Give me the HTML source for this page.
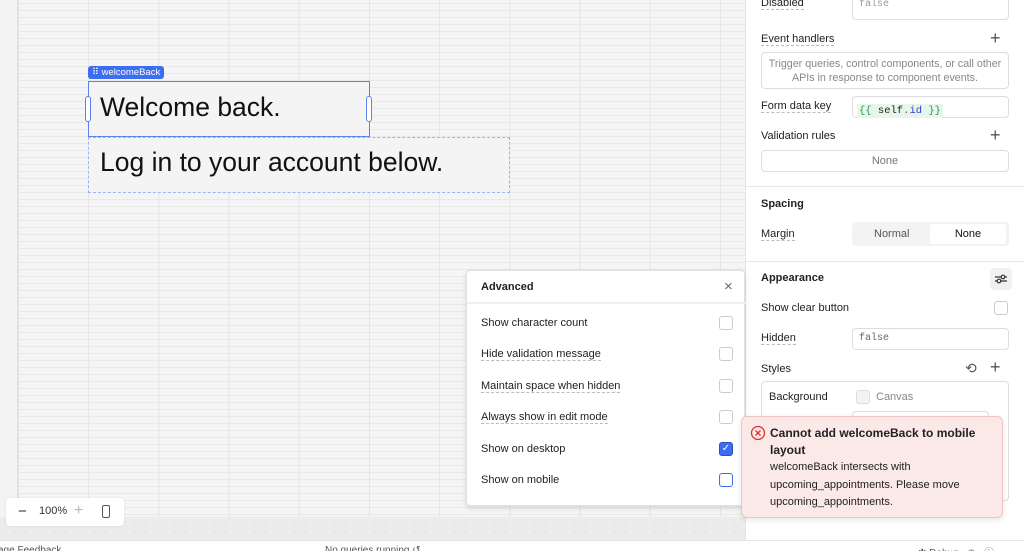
<!DOCTYPE html>
<html><head><meta charset="utf-8"><style>
*{box-sizing:border-box;margin:0;padding:0}
body{width:1024px;height:551px;overflow:hidden;position:relative;font-family:"Liberation Sans",sans-serif;background:#efefef;color:#1f1f1f}
.abs{position:absolute}
#canvas{left:17px;top:0;width:728px;height:517px;background-color:#f5f5f5;
background-image:linear-gradient(90deg,#e4e4e4 1px,transparent 1px),linear-gradient(#e9e9e9 1px,transparent 1px);
background-size:70.2px 100%,100% 7px;background-position:0 0,0 3px;border-left:1px solid #e2e2e2}
.lbl{font-size:11px;color:#222}
.u{border-bottom:1px dashed #bbb}
.inp{border:1px solid #ddd;border-radius:4px;background:#fff}
.cb{width:14px;height:14px;border:1px solid #ccc;border-radius:3px;background:#fff}
.plus{font-size:18px;color:#555;font-weight:300}
</style></head><body>
<div class="abs" style="left:0;top:0;width:17px;height:517px;background:#f3f3f3"></div>
<div id="canvas" class="abs"></div>
<div class="abs" style="left:0;top:517px;width:745px;height:23px;background:#ececec;background-image:radial-gradient(#d4d4d4 0.7px,transparent 0.8px);background-size:10px 10px"></div>
<div class="abs" style="left:88px;top:66px;height:13px;padding:0 4px;background:#3d6df0;color:#fff;font-size:9.5px;line-height:13px;border-radius:3px">⠿ welcomeBack</div>
<div class="abs" style="left:88px;top:81px;width:282px;height:56px;border:1.5px solid #5a83ef;background:#f4f4f4"></div>
<div class="abs" style="left:85px;top:96px;width:6px;height:26px;border:1.5px solid #5a83ef;border-radius:3px;background:#fff"></div>
<div class="abs" style="left:366px;top:96px;width:6px;height:26px;border:1.5px solid #5a83ef;border-radius:3px;background:#fff"></div>
<div class="abs" style="left:100px;top:92px;font-size:26.5px;color:#111">Welcome back.</div>
<div class="abs" style="left:88px;top:137px;width:422px;height:56px;border:1px dashed #9bb3f0;background:#f4f4f4"></div>
<div class="abs" style="left:100px;top:147px;font-size:26.5px;color:#111">Log in to your account below.</div>
<div class="abs" style="left:6px;top:498px;width:118px;height:28px;background:#fff;border-radius:4px;box-shadow:0 0 2px rgba(0,0,0,.1);font-size:11px;color:#333">
<span class="abs" style="left:12px;top:5px;font-size:15px">−</span><span class="abs" style="left:33px;top:7px">100%</span><span class="abs" style="left:68px;top:4px;font-size:16px;color:#bbb">+</span>
<span class="abs" style="left:96px;top:7px;width:8px;height:13px;border:1.3px solid #555;border-radius:2px"></span></div>
<div class="abs" style="left:0;top:540px;width:1024px;height:11px;background:#fff;border-top:1px solid #e6e6e6;font-size:10px;color:#555;overflow:hidden">
<span class="abs" style="left:-2px;top:4px">age Feedback</span><span class="abs" style="left:325px;top:4px">No queries running ↺</span><span class="abs" style="left:918px;top:3px">✱ Debug &nbsp; ◷ &nbsp; ⓘ</span></div>
<div class="abs" style="left:745px;top:0;width:279px;height:540px;background:#fff;border-left:1px solid #e4e4e4">
<div class="abs lbl u" style="left:15px;top:-3px">Disabled</div>
<div class="abs inp" style="left:106px;top:-4px;width:157px;height:24px;font:10px 'Liberation Mono',monospace;color:#999;padding:2px 6px">false</div>
<div class="abs lbl u" style="left:15px;top:33px">Event handlers</div><div class="abs plus" style="left:244px;top:28px">+</div>
<div class="abs inp" style="left:15px;top:52px;width:248px;height:37px;font-size:10.7px;color:#888;text-align:center;line-height:14px;padding:4px 6px 0">Trigger queries, control components, or call other APIs in response to component events.</div>
<div class="abs lbl u" style="left:15px;top:100px">Form data key</div>
<div class="abs inp" style="left:106px;top:96px;width:157px;height:22px;padding:3px 4px"><span style="background:#e6f6ea;font:10.5px 'Liberation Mono',monospace;color:#2a9a4a;padding:1px 2px">{{ <span style="color:#222">self</span><span style="color:#d33">.</span><span style="color:#2c3ed6">id</span> }}</span></div>
<div class="abs lbl" style="left:15px;top:130px">Validation rules</div><div class="abs plus" style="left:244px;top:125px">+</div>
<div class="abs inp" style="left:15px;top:150px;width:248px;height:22px;font-size:11px;color:#777;text-align:center;line-height:20px">None</div>
<div class="abs" style="left:0;top:186px;width:279px;height:1px;background:#e8e8e8"></div>
<div class="abs lbl" style="left:15px;top:198px;font-weight:bold">Spacing</div>
<div class="abs lbl u" style="left:15px;top:228px">Margin</div>
<div class="abs" style="left:106px;top:222px;width:157px;height:24px;background:#f3f3f3;border-radius:4px;font-size:11px">
<span class="abs" style="left:22px;top:6px;color:#555">Normal</span>
<span class="abs" style="left:78px;top:2px;width:76px;height:20px;background:#fff;border-radius:3px;text-align:center;line-height:20px;color:#111">None</span></div>
<div class="abs" style="left:0;top:261px;width:279px;height:1px;background:#e8e8e8"></div>
<div class="abs lbl" style="left:15px;top:272px;font-weight:bold">Appearance</div>
<div class="abs" style="left:244px;top:268px;width:22px;height:22px;background:#f0f0f0;border-radius:4px">
<svg width="22" height="22" viewBox="0 0 22 22" stroke="#333" fill="none" stroke-width="1.2"><path d="M5 9h12M5 13h12"/><circle cx="13" cy="9" r="1.8" fill="#f0f0f0"/><circle cx="9" cy="13" r="1.8" fill="#f0f0f0"/></svg></div>
<div class="abs lbl" style="left:15px;top:302px">Show clear button</div><div class="abs cb" style="left:248px;top:301px"></div>
<div class="abs lbl u" style="left:15px;top:332px">Hidden</div>
<div class="abs inp" style="left:106px;top:328px;width:157px;height:22px;font:10px 'Liberation Mono',monospace;color:#666;padding:4px 6px">false</div>
<div class="abs lbl" style="left:15px;top:363px">Styles</div><div class="abs" style="left:219px;top:360px;font-size:14px;color:#555">⟲</div><div class="abs plus" style="left:244px;top:357px">+</div>
<div class="abs inp" style="left:15px;top:381px;width:248px;height:120px"></div>
<div class="abs lbl" style="left:23px;top:391px">Background</div>
<div class="abs cb" style="left:110px;top:390px;background:#f3f3f3;border-color:#ddd"></div><div class="abs" style="left:130px;top:391px;font-size:11px;color:#888">Canvas</div>
<div class="abs inp" style="left:106px;top:411px;width:137px;height:22px"></div>
</div>
<div class="abs" style="left:466px;top:270px;width:279px;height:236px;background:#fff;border:1px solid #e0e0e0;border-radius:4px;box-shadow:0 2px 6px rgba(0,0,0,.12)">
<div class="abs lbl" style="left:14px;top:10px;font-weight:bold">Advanced</div>
<div class="abs" style="left:257px;top:7px;font-size:15px;color:#666">×</div>
<div class="abs" style="left:0;top:31px;width:279px;height:2px;background:#eee"></div>
<div class="abs lbl" style="left:14px;top:46px">Show character count</div><div class="abs cb" style="left:252px;top:45px"></div>
<div class="abs lbl u" style="left:14px;top:77px">Hide validation message</div><div class="abs cb" style="left:252px;top:76px"></div>
<div class="abs lbl u" style="left:14px;top:109px">Maintain space when hidden</div><div class="abs cb" style="left:252px;top:108px"></div>
<div class="abs lbl u" style="left:14px;top:140px">Always show in edit mode</div><div class="abs cb" style="left:252px;top:139px"></div>
<div class="abs lbl" style="left:14px;top:172px">Show on desktop</div><div class="abs cb" style="left:252px;top:171px;background:#3d6df0;border-color:#2c4fc0;color:#fff;font-size:10px;text-align:center;line-height:12px">✓</div>
<div class="abs lbl" style="left:14px;top:203px">Show on mobile</div><div class="abs cb" style="left:252px;top:202px;border:1.5px solid #3d6df0"></div>
</div>
<div class="abs" style="left:741px;top:416px;width:262px;height:102px;background:#fbe9e8;border:1px solid #f0c4c2;border-radius:6px;box-shadow:0 2px 6px rgba(0,0,0,.1)">
<svg class="abs" style="left:8px;top:8px" width="16" height="16" viewBox="0 0 16 16" fill="none" stroke="#d33" stroke-width="1.3"><circle cx="8" cy="8" r="6.5"/><path d="M5.5 5.5l5 5M10.5 5.5l-5 5"/></svg>
<div class="abs" style="left:28px;top:8px;width:225px;font-size:12px;font-weight:bold;line-height:17px;color:#222">Cannot add welcomeBack to mobile layout</div>
<div class="abs" style="left:28px;top:42px;width:230px;font-size:11px;line-height:17.5px;color:#222">welcomeBack intersects with upcoming_appointments. Please move upcoming_appointments.</div>
</div>
</body></html>
